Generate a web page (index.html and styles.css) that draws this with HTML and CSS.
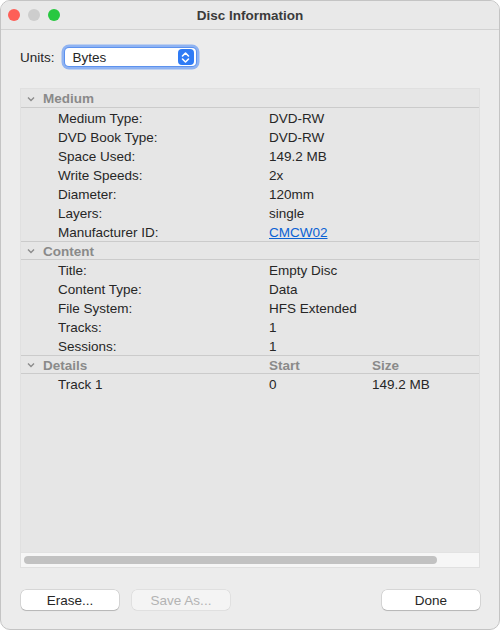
FILE: index.html
```html
<!DOCTYPE html>
<html lang="en">
<head>
    <meta charset="UTF-8">
    <title>Disc Information</title>
    <link rel="stylesheet" href="styles.css">
</head>
<body>
    <div class="window">
        <div class="titlebar">
            <div class="lights">
                <span class="light close"></span>
                <span class="light min"></span>
                <span class="light zoom"></span>
            </div>
            <div class="title">Disc Information</div>
        </div>

        <div class="content">
            <div class="units">
                <span>Units:</span>
                <div class="popup">
                    <span>Bytes</span>
                    <span class="stepper">
                        <svg width="9" height="13" viewBox="0 0 9 13">
                            <path d="M1.5 5 L4.5 2 L7.5 5 M1.5 8 L4.5 11 L7.5 8" fill="none" stroke="#fff" stroke-width="1.6" stroke-linecap="round" stroke-linejoin="round"/>
                        </svg>
                    </span>
                </div>
            </div>

            <div class="panel">
                <div class="list">
                    <div class="group first">
                        <span class="chev"><svg width="8" height="6" viewBox="0 0 8 6"><path d="M1 1.5 L4 4.5 L7 1.5" fill="none" stroke="#8c8c8c" stroke-width="1.4"/></svg></span>Medium
                    </div>
                    <div class="row"><span>Medium Type:</span><span>DVD-RW</span></div>
                    <div class="row"><span>DVD Book Type:</span><span>DVD-RW</span></div>
                    <div class="row"><span>Space Used:</span><span>149.2 MB</span></div>
                    <div class="row"><span>Write Speeds:</span><span>2x</span></div>
                    <div class="row"><span>Diameter:</span><span>120mm</span></div>
                    <div class="row"><span>Layers:</span><span>single</span></div>
                    <div class="row"><span>Manufacturer ID:</span><span><a href="#">CMCW02</a></span></div>

                    <div class="group">
                        <span class="chev"><svg width="8" height="6" viewBox="0 0 8 6"><path d="M1 1.5 L4 4.5 L7 1.5" fill="none" stroke="#8c8c8c" stroke-width="1.4"/></svg></span>Content
                    </div>
                    <div class="row"><span>Title:</span><span>Empty Disc</span></div>
                    <div class="row"><span>Content Type:</span><span>Data</span></div>
                    <div class="row"><span>File System:</span><span>HFS Extended</span></div>
                    <div class="row"><span>Tracks:</span><span>1</span></div>
                    <div class="row"><span>Sessions:</span><span>1</span></div>

                    <div class="group cols">
                        <span><span class="chev"><svg width="8" height="6" viewBox="0 0 8 6"><path d="M1 1.5 L4 4.5 L7 1.5" fill="none" stroke="#8c8c8c" stroke-width="1.4"/></svg></span>Details</span>
                        <span>Start</span>
                        <span>Size</span>
                    </div>
                    <div class="row"><span>Track 1</span><span>0</span><span>149.2 MB</span></div>
                </div>
                <div class="hscroll">
                    <div class="thumb"></div>
                </div>
            </div>

            <div class="buttons">
                <button class="btn">Erase...</button>
                <button class="btn disabled">Save As...</button>
                <span class="spacer"></span>
                <button class="btn">Done</button>
            </div>
        </div>
    </div>
</body>
</html>
```

FILE: styles.css
```css
* {
    box-sizing: border-box;
}
body {
    margin: 0;
    background: #ffffff;
    font-family: "Liberation Sans", Arial, sans-serif;
    font-size: 13.5px;
    color: #262626;
}
.window {
    width: 500px;
    height: 630px;
    background: #ececec;
    border: 1px solid #c4c4c4;
    border-radius: 10px;
    overflow: hidden;
    display: flex;
    flex-direction: column;
}
.titlebar {
    height: 29px;
    flex: none;
    display: flex;
    align-items: center;
    position: relative;
    background: #e9e9e9;
    border-bottom: 1px solid #d2d2d2;
}
.lights {
    display: flex;
    gap: 8px;
    padding-left: 7px;
}
.light {
    width: 12px;
    height: 12px;
    border-radius: 50%;
}
.close { background: #fe5f57; }
.min { background: #cdcdcd; }
.zoom { background: #28c840; }
.title {
    position: absolute;
    left: 0;
    right: 0;
    text-align: center;
    font-weight: bold;
    color: #3b3b3b;
}
.content {
    flex: 1;
    display: flex;
    flex-direction: column;
    padding: 0 19px;
}
.units {
    display: flex;
    align-items: center;
    margin-top: 18px;
    height: 18px;
}
.popup {
    margin-left: 10px;
    width: 131px;
    height: 18px;
    background: #fff;
    border-radius: 4px;
    box-shadow: 0 0 0 1px #5d92ee, 0 0 0 3.5px #8fb3f2;
    display: flex;
    align-items: center;
    justify-content: space-between;
    padding: 0 2px 0 8px;
}
.stepper {
    width: 16px;
    height: 16px;
    border-radius: 4px;
    background: #2f7bf5;
    display: flex;
    align-items: center;
    justify-content: center;
}
.panel {
    margin-top: 22px;
    height: 480px;
    background: #e6e6e6;
    border: 1px solid #e0e0e0;
    display: flex;
    flex-direction: column;
}
.list {
    flex: 1;
}
.group {
    height: 19px;
    display: flex;
    align-items: center;
    padding-left: 6px;
    padding-top: 1px;
    font-weight: bold;
    color: #8a8a8a;
    border-top: 1px solid #cbcbcb;
    border-bottom: 1px solid #cbcbcb;
}
.group.first {
    border-top: none;
}
.chev {
    display: inline-flex;
    width: 8px;
    margin-right: 8px;
}
.row,
.group.cols {
    display: grid;
    grid-template-columns: 248px 103px 1fr;
    align-items: center;
}
.group.cols > span:first-child {
    display: flex;
    align-items: center;
}
.group.cols {
    padding-left: 6px;
    grid-template-columns: 242px 103px 1fr;
}
.row {
    height: 19px;
    padding-top: 1px;
}
.row > span:first-child {
    padding-left: 37px;
}
.row a {
    color: #0b62d4;
}
.hscroll {
    height: 15px;
    background: #f6f6f6;
    border-top: 1px solid #e2e2e2;
    padding: 3px 3px 0 3px;
}
.thumb {
    width: 413px;
    height: 8px;
    border-radius: 4px;
    background: #c2c2c2;
}
.buttons {
    display: flex;
    margin-top: 22px;
    gap: 13px;
    padding-left: 1px;
}
.spacer {
    flex: 1;
}
.btn {
    width: 98px;
    height: 20px;
    border: none;
    border-radius: 5px;
    background: #ffffff;
    box-shadow: 0 0 0 0.5px rgba(0, 0, 0, 0.18), 0 1px 1px rgba(0, 0, 0, 0.15);
    font-family: inherit;
    font-size: 13.5px;
    color: #262626;
    padding: 0;
}
.btn.disabled {
    background: #f4f4f4;
    color: #b3b3b3;
    box-shadow: 0 0 0 0.5px rgba(0, 0, 0, 0.1);
}
```
